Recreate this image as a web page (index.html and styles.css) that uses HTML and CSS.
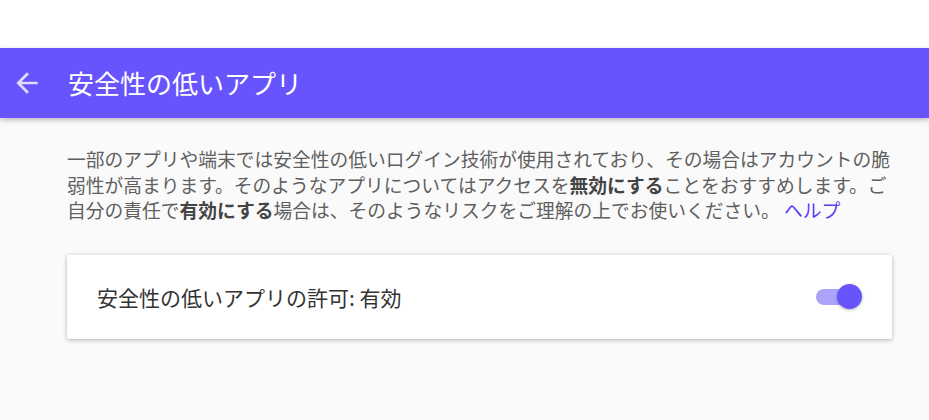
FILE: index.html
```html
<!DOCTYPE html>
<html lang="ja">
<head>
    <meta charset="UTF-8">
    <meta name="viewport" content="width=device-width, initial-scale=1.0">
    <title>安全性の低いアプリ</title>
    <link rel="stylesheet" href="styles.css">
</head>
<body>

    <div class="top-space"></div>

    <header class="app-bar">
        <a href="#" class="back-btn" aria-label="戻る">
            <svg width="32" height="32" viewBox="0 0 24 24">
                <path d="M20 11H7.83l5.59-5.59L12 4l-8 8 8 8 1.41-1.41L7.83 13H20v-2z" fill="currentColor"/>
            </svg>
        </a>
        <h1>安全性の低いアプリ</h1>
    </header>

    <main class="content">
        <p class="desc">一部のアプリや端末では安全性の低いログイン技術が使用されており、その場合はアカウントの脆弱性が高まります。そのようなアプリについてはアクセスを<b>無効にする</b>ことをおすすめします。ご自分の責任で<b>有効にする</b>場合は、そのようなリスクをご理解の上でお使いください。 <a href="#" class="help">ヘルプ</a></p>

        <!-- Setting card -->
        <div class="card">
            <span class="card-label">安全性の低いアプリの許可: 有効</span>
            <label class="switch">
                <input type="checkbox" checked>
                <span class="track"></span>
                <span class="thumb"></span>
            </label>
        </div>
    </main>

</body>
</html>
```

FILE: styles.css
```css
body {
    margin: 0;
    background-color: #fafafa;
    font-family: "Noto Sans CJK JP", "Noto Sans", sans-serif;
}

.top-space {
    height: 48px;
    background-color: #ffffff;
}

/* Header bar */
.app-bar {
    display: flex;
    align-items: center;
    height: 70px;
    background-color: #6854fd;
    color: #ffffff;
    box-shadow: 0 2px 5px rgba(0, 0, 0, 0.25);
    position: relative;
}

.back-btn {
    display: flex;
    color: rgba(255, 255, 255, 0.8);
    margin-left: 11px;
    width: 32px;
    height: 32px;
}

.app-bar h1 {
    margin: 0 0 0 25px;
    font-size: 26px;
    font-weight: 400;
    line-height: 1;
}

/* Body content */
.content {
    padding: 28px 37px 40px 67px;
}

.desc {
    margin: 0;
    font-size: 18.75px;
    line-height: 25.5px;
    color: #5f5f5f;
}

.desc b {
    color: #444;
    font-weight: bold;
}

.help {
    color: #5b3cf2;
    text-decoration: none;
}

.card {
    display: flex;
    align-items: center;
    justify-content: space-between;
    margin-top: 32px;
    height: 84px;
    padding: 0 30px;
    background-color: #ffffff;
    border-radius: 2px;
    box-shadow: 0 1px 4px rgba(0, 0, 0, 0.3);
}

.card-label {
    font-size: 21px;
    color: #333;
}

/* Toggle switch */
.switch {
    position: relative;
    width: 46px;
    height: 26px;
    cursor: pointer;
}

.switch input {
    display: none;
}

.switch .track {
    position: absolute;
    left: 0;
    top: 5px;
    width: 40px;
    height: 16px;
    border-radius: 8px;
    background-color: #aca3fb;
}

.switch .thumb {
    position: absolute;
    right: 0;
    top: 0;
    width: 25px;
    height: 25px;
    border-radius: 50%;
    background-color: #6854fd;
    box-shadow: 0 1px 3px rgba(0, 0, 0, 0.3);
}
```
